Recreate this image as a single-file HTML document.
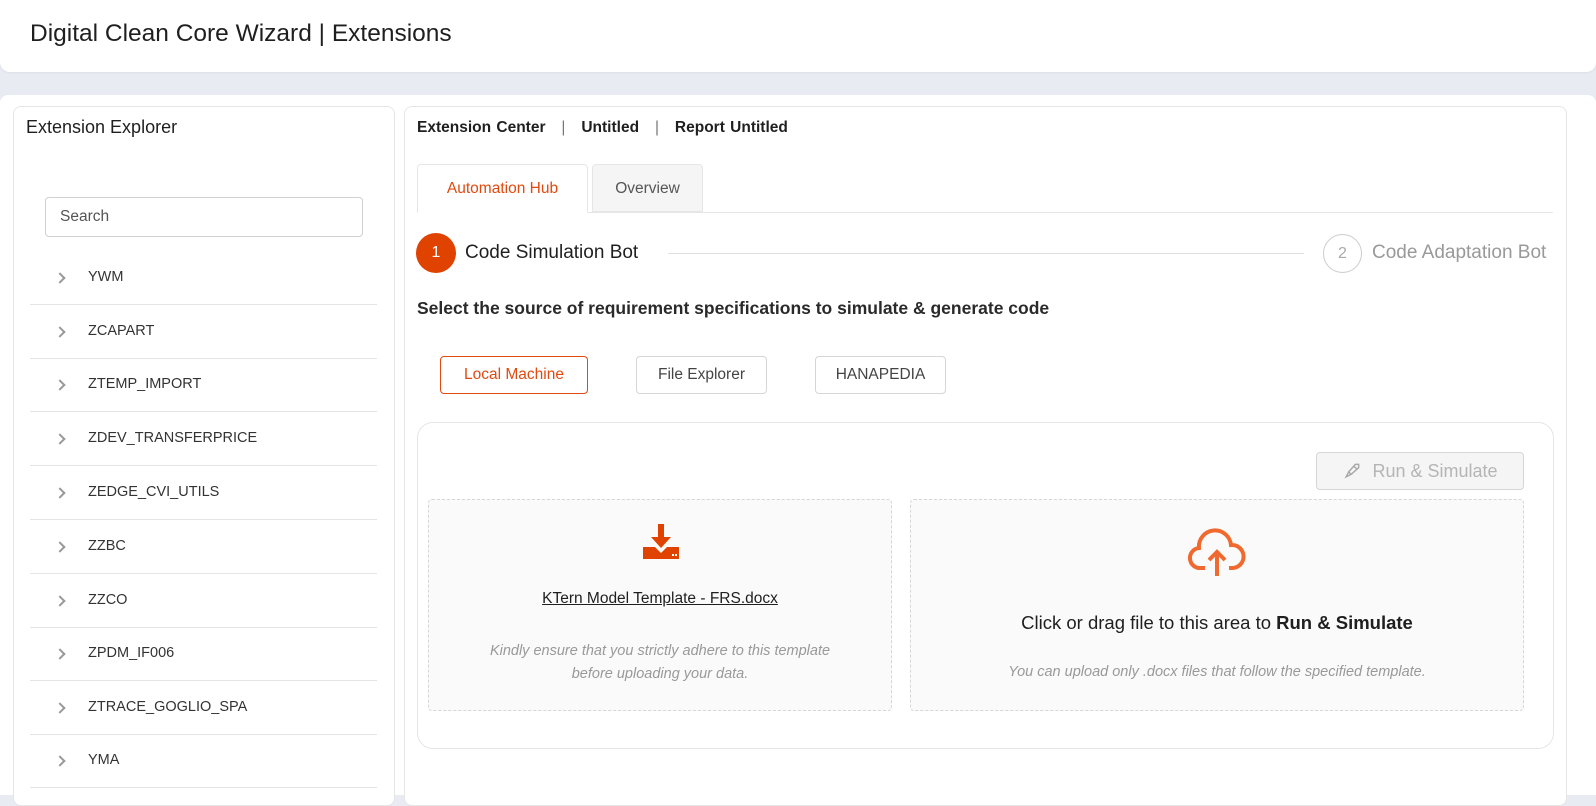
<!DOCTYPE html>
<html><head><meta charset="utf-8"><style>
*{box-sizing:border-box;margin:0;padding:0}
body{width:1596px;height:795px;overflow:hidden;background:#e8ebf2;font-family:"Liberation Sans","DejaVu Sans",sans-serif;color:#1f1f1f;position:relative}
.abs{position:absolute}
.hdr{left:0;top:0;width:1596px;height:72px;background:#fff;border-radius:0 0 10px 10px;box-shadow:0 1px 2px rgba(0,0,0,.05)}
.hdr h1{position:absolute;left:30px;top:20px;font-size:24.5px;font-weight:400;color:#1f1f1f}
.main{left:0;top:95px;width:1596px;height:700px;background:#fff;border-radius:8px 8px 0 0}
.card{border:1px solid #e6e6e6;border-radius:8px;background:#fff}
.item{position:absolute;left:30px;width:347px;height:54px;border-bottom:1px solid #e4e4e4;font-size:14.5px;color:#333}
.item span{position:absolute;left:58px;top:18px}
.item i{position:absolute;left:26px;top:23px;width:8px;height:8px;border-top:2px solid #999;border-right:2px solid #999;transform:rotate(45deg)}
.btn{position:absolute;height:38px;border:1px solid #d6d6d6;border-radius:4px;font-size:15.5px;color:#444;text-align:center;line-height:36px;background:#fff}
.dash{position:absolute;border:1px dashed #d6d6d6;border-radius:4px;background:#fafafa;text-align:center}
</style></head><body>
<div class="abs hdr"><h1>Digital Clean Core Wizard | Extensions</h1></div>
<div class="abs main"></div>
<div class="abs card" style="left:13px;top:106px;width:382px;height:700px"></div>
<div class="abs" style="left:26px;top:117px;font-size:18px;color:#1f1f1f">Extension Explorer</div>
<div class="abs" style="left:45px;top:197px;width:318px;height:40px;border:1px solid #d0d0d0;border-radius:4px;font-size:15.5px;color:#555;padding:10px 14px">Search</div>
<div class="item" style="top:251px"><i></i><span>YWM</span></div>
<div class="item" style="top:305px"><i></i><span>ZCAPART</span></div>
<div class="item" style="top:358px"><i></i><span>ZTEMP_IMPORT</span></div>
<div class="item" style="top:412px"><i></i><span>ZDEV_TRANSFERPRICE</span></div>
<div class="item" style="top:466px"><i></i><span>ZEDGE_CVI_UTILS</span></div>
<div class="item" style="top:520px"><i></i><span>ZZBC</span></div>
<div class="item" style="top:574px"><i></i><span>ZZCO</span></div>
<div class="item" style="top:627px"><i></i><span>ZPDM_IF006</span></div>
<div class="item" style="top:681px"><i></i><span>ZTRACE_GOGLIO_SPA</span></div>
<div class="item" style="top:734px"><i></i><span>YMA</span></div>

<div class="abs card" style="left:404px;top:106px;width:1163px;height:700px"></div>
<div class="abs" style="left:417px;top:119px;font-size:15.5px;font-weight:bold;color:#1f1f1f;word-spacing:1px">Extension Center &nbsp; <span style="font-weight:400;color:#777">|</span> &nbsp; Untitled &nbsp; <span style="font-weight:400;color:#777">|</span> &nbsp; Report Untitled</div>
<div class="abs" style="left:417px;top:212px;width:1136px;height:1px;background:#e6e6e6"></div>
<div class="abs" style="left:417px;top:164px;width:171px;height:49px;border:1px solid #e6e6e6;border-bottom:1px solid #fff;border-radius:4px 4px 0 0;background:#fff;color:#e04a10;font-size:15.5px;text-align:center;line-height:48px">Automation Hub</div>
<div class="abs" style="left:592px;top:164px;width:111px;height:48px;border:1px solid #e6e6e6;border-radius:4px 4px 0 0;background:#f5f5f5;color:#555;font-size:15.5px;text-align:center;line-height:48px">Overview</div>

<div class="abs" style="left:416px;top:233px;width:40px;height:40px;border-radius:50%;background:#e04200;color:#fff;font-size:16px;text-align:center;line-height:40px">1</div>
<div class="abs" style="left:465px;top:242px;font-size:19px;color:#1f1f1f">Code Simulation Bot</div>
<div class="abs" style="left:668px;top:253px;width:636px;height:1px;background:#e0e0e0"></div>
<div class="abs" style="left:1323px;top:234px;width:39px;height:39px;border-radius:50%;border:1px solid #ccc;color:#aaa;font-size:16px;text-align:center;line-height:37px">2</div>
<div class="abs" style="left:1372px;top:242px;font-size:19px;color:#999">Code Adaptation Bot</div>

<div class="abs" style="left:417px;top:298px;font-size:17.5px;font-weight:bold;color:#2a2a2a">Select the source of requirement specifications to simulate &amp; generate code</div>
<div class="btn" style="left:440px;top:356px;width:148px;border-color:#e04a10;color:#e04a10">Local Machine</div>
<div class="btn" style="left:636px;top:356px;width:131px">File Explorer</div>
<div class="btn" style="left:815px;top:356px;width:131px">HANAPEDIA</div>

<div class="abs" style="left:417px;top:422px;width:1137px;height:327px;border:1px solid #e6e6e6;border-radius:16px"></div>
<div class="btn" style="left:1316px;top:452px;width:208px;background:#f5f5f5;color:#b5b5b5;font-size:18px"><svg width="20" height="20" viewBox="0 0 24 24" style="vertical-align:-4px;margin-right:10px" fill="none" stroke="#aaa" stroke-width="1.8"><path d="M5 19l3-6 3 3-6 3zM8 13l8-9 4 0 0 4-9 8M14 6l4 4"/></svg>Run &amp; Simulate</div>

<div class="dash" style="left:428px;top:499px;width:464px;height:212px">
<svg width="40" height="40" viewBox="0 0 40 40" style="position:absolute;left:212px;top:22px"><rect x="17" y="2" width="6" height="14" fill="#e04200"/><path d="M10 15h20l-10 11z" fill="#e04200"/><path d="M2 25h12l6 6 6-6h12v12H2z" fill="#e04200"/><rect x="31" y="32" width="2" height="2" fill="#fff"/><rect x="34" y="32" width="2" height="2" fill="#fff"/></svg>
<div style="position:absolute;left:0;right:0;top:90px;font-size:15.5px;color:#1f1f1f;text-decoration:underline">KTern Model Template - FRS.docx</div>
<div style="position:absolute;left:0;right:0;top:140px;font-size:14.5px;color:#999;font-style:italic;line-height:23px">Kindly ensure that you strictly adhere to this template<br>before uploading your data.</div>
</div>
<div class="dash" style="left:910px;top:499px;width:614px;height:212px">
<svg width="60" height="50" viewBox="0 0 60 50" style="position:absolute;left:276px;top:28px" fill="none" stroke="#f06a30" stroke-width="4"><path d="M18 40H14A10 10 0 0 1 12 20 A16 16 0 0 1 44 17 A11 11 0 0 1 46 40H42"/><path d="M30 48V24M22 32l8-8 8 8"/></svg>
<div style="position:absolute;left:0;right:0;top:112px;font-size:18.5px;color:#1f1f1f">Click or drag file to this area to <b>Run &amp; Simulate</b></div>
<div style="position:absolute;left:0;right:0;top:164px;font-size:14.5px;color:#999;font-style:italic">You can upload only .docx files that follow the specified template.</div>
</div>
</body></html>
